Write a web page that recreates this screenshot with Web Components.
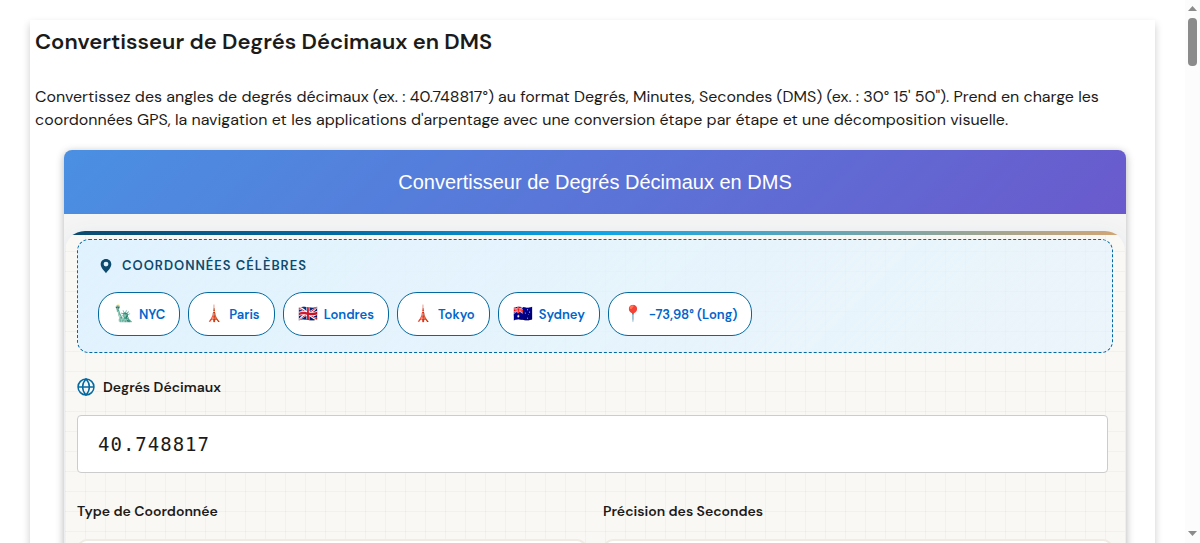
<!DOCTYPE html>
<html lang="fr">
<head>
<meta charset="utf-8">
<title>Convertisseur de Degrés Décimaux en DMS</title>
<style>
  body { margin: 0; background: #fff; color: #1c1b19; font-family: "DM Sans", Inter, sans-serif; }
</style>
</head>
<body>
<converter-page></converter-page>

<template id="page-tpl">
  <style>
    :host { display: flex; height: 100vh; overflow: hidden; }
    main { flex: 1; min-width: 0; padding: 20px 30px 0; }
    article { min-height: 100vh; padding: 5px 5px 0; background: #fff; box-shadow: 0 4px 8px rgba(0,0,0,.2); }
    h1 { margin: 0; font-size: 22px; line-height: 34px; font-weight: 600; }
    p { margin: 26px 0 0; font-size: 16px; line-height: 23px; }
    tool-frame { margin: 19px 24px 0 29px; }
  </style>
  <main>
    <article>
      <h1>Convertisseur de Degrés Décimaux en DMS</h1>
      <p>Convertissez des angles de degrés décimaux (ex. : 40.748817°) au format Degrés, Minutes, Secondes (DMS) (ex. : 30° 15' 50"). Prend en charge les coordonnées GPS, la navigation et les applications d'arpentage avec une conversion étape par étape et une décomposition visuelle.</p>
      <tool-frame>
        <span slot="title">Convertisseur de Degrés Décimaux en DMS</span>
        <dms-form></dms-form>
      </tool-frame>
    </article>
  </main>
  <scroll-track></scroll-track>
</template>

<template id="frame-tpl">
  <style>
    :host { display: block; border-radius: 8px; overflow: hidden; box-shadow: 0 2px 8px rgba(0,0,0,.3); background: #f5f5f5; }
    h2 { margin: 0; padding: 16px; font: 400 20px/32px "Liberation Sans", Arial, sans-serif; text-align: center; color: #fff; background: linear-gradient(135deg, #4a90e2, #6a5acd); }
    .body { padding: 17px 1px 0; }
  </style>
  <h2><slot name="title"></slot></h2>
  <div class="body"><slot></slot></div>
</template>

<template id="form-tpl">
  <style>
    :host { display: block; min-height: 400px; border-radius: 20px; overflow: hidden;
      background:
        linear-gradient(rgba(28,27,25,.03) 1px, transparent 1px) 0 0 / 20px 20px,
        linear-gradient(90deg, rgba(28,27,25,.03) 1px, transparent 1px) 0 0 / 20px 20px,
        #faf8f5;
      box-shadow: 0 4px 24px rgba(12,74,110,.08); }
    .bar { height: 4px; background: linear-gradient(90deg, #0c4a6e, #0369a1 25%, #0ea5e9 50%, #d4a574); }
    form { padding: 4px 12px 0; }
    label { display: flex; align-items: center; gap: 8px; font-size: 14px; line-height: 20px; font-weight: 600; }
    .value { margin: 24px 5px 0 0; }
    .value svg { width: 18px; height: 18px; }
    input { display: block; box-sizing: border-box; width: 100%; height: 58px; margin-top: 18px; padding: 0 20px; border: 1px solid #ccc; border-radius: 4px; background: #fff; color: #1c1b19; font: 19px "DejaVu Sans Mono", monospace; letter-spacing: 1px; outline: 0; }
    .row { display: grid; grid-template-columns: 1fr 1fr; gap: 16px; margin-top: 28px; }
    select { display: block; width: 100%; height: 52px; margin-top: 18px; padding: 0 16px; border: 2px solid #f0ebe3; border-radius: 10px; background: #fff; font: inherit; appearance: none; }
  </style>
  <div class="bar"></div>
  <form>
    <famous-places></famous-places>
    <div class="value">
      <label for="deg">
        <svg viewBox="0 0 24 24" fill="none" stroke="#0369a1" stroke-width="2" aria-hidden="true"><circle cx="12" cy="12" r="10.6"/><path d="M1.5 12h21M12 1.4c3 3.2 4.5 6.800 4.500 10.600S15 19.400 12 22.600C9 19.400 7.500 15.800 7.500 12S9 4.600 12 1.400z"/></svg>
        Degrés Décimaux
      </label>
      <input id="deg" type="text" value="40.748817">
    </div>
    <div class="row">
      <div><label for="type">Type de Coordonnée</label><select id="type"></select></div>
      <div><label for="prec">Précision des Secondes</label><select id="prec"></select></div>
    </div>
  </form>
</template>

<template id="places-tpl">
  <style>
    :host { display: block; box-sizing: border-box; padding: 15px 20px 16px; border: 1px dashed #0369a1; border-radius: 12px; background: linear-gradient(135deg, #e0f2fe, rgba(224,242,254,.55)); }
    h3 { display: flex; align-items: center; gap: 8px; margin: 0 0 15px; font-size: 13px; line-height: 22px; font-weight: 600; letter-spacing: 1px; text-transform: uppercase; color: #0c4a6e; }
    h3 svg { width: 16px; height: 16px; }
    .list { display: flex; flex-wrap: wrap; gap: 8px; }
  </style>
  <h3><svg viewBox="0 0 24 24" fill="#0c4a6e" aria-hidden="true"><path d="M12 1.500C7.300 1.500 4 5 4 9.400c0 5.300 5.500 9.800 8 13.600 2.500-3.800 8-8.300 8-13.600 0-4.400-3.300-7.900-8-7.900zm0 11.200a3.600 3.600 0 1 1 0-7.200 3.600 3.600 0 0 1 0 7.200z"/></svg>Coordonnées célèbres</h3>
  <div class="list">
    <place-chip icon="🗽">NYC</place-chip>
    <place-chip icon="🗼">Paris</place-chip>
    <place-chip icon="🇬🇧">Londres</place-chip>
    <place-chip icon="🗼">Tokyo</place-chip>
    <place-chip icon="🇦🇺">Sydney</place-chip>
    <place-chip icon="📍">-73,98° (Long)</place-chip>
  </div>
</template>

<template id="chip-tpl">
  <style>
    :host { display: block; }
    button { display: flex; align-items: center; gap: 5px; height: 44px; padding: 0 14px 0 15px; border: 1px solid #0369a1; border-radius: 20px; background: #fff; color: #0066cc; font-family: inherit; font-size: 13px; font-weight: 600; }
    .icon { width: 20px; text-align: center; font-size: 16px; line-height: 20px; font-family: "Noto Color Emoji", sans-serif; }
  </style>
  <button type="button"><span class="icon"></span><slot></slot></button>
</template>

<template id="scroll-tpl">
  <style>
    :host { display: flex; flex-direction: column; align-items: center; width: 15px; box-sizing: border-box; padding: 6px 0 7px; background: #fcfcfc; }
    svg { display: block; width: 9px; height: 5px; fill: #8b8b8b; }
    .thumb { width: 9px; height: 48px; margin: 7px 0 auto; border-radius: 4px; background: #8b8b8b; }
  </style>
  <svg viewBox="0 0 9 5"><path d="M0 5 4.500 0 9 5z"/></svg>
  <div class="thumb"></div>
  <svg viewBox="0 0 9 5"><path d="M0 0h9L4.500 5z"/></svg>
</template>

<script>
  const define = (name, tpl, setup) => customElements.define(name, class extends HTMLElement {
    constructor() {
      super();
      const root = this.attachShadow({ mode: "open" });
      root.append(document.getElementById(tpl).content.cloneNode(true));
    }
    connectedCallback() { if (setup) setup(this); }
  });
  define("place-chip", "chip-tpl", el => {
    el.shadowRoot.querySelector(".icon").textContent = el.getAttribute("icon");
  });
  define("famous-places", "places-tpl");
  define("dms-form", "form-tpl");
  define("tool-frame", "frame-tpl");
  define("scroll-track", "scroll-tpl");
  define("converter-page", "page-tpl");
</script>
</body>
</html>
